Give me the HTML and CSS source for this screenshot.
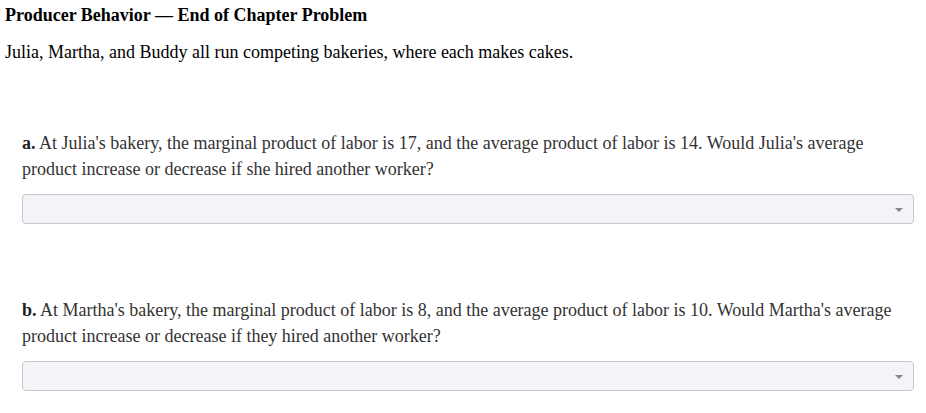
FILE: index.html
```
<!DOCTYPE html>
<html>
<head>
<meta charset="utf-8">
<link rel="stylesheet" href="styles.css">
</head>
<body>
<div class="page">
  <h1 class="title">Producer Behavior — End of Chapter Problem</h1>
  <p class="intro">Julia, Martha, and Buddy all run competing bakeries, where each makes cakes.</p>
  <div class="question q-a">
    <p class="qtext"><b>a.</b> At Julia's bakery, the marginal product of labor is 17, and the average product of labor is 14. Would Julia's average product increase or decrease if she hired another worker?</p>
    <div class="select"><span class="arrow"></span></div>
  </div>
  <div class="question q-b">
    <p class="qtext"><b>b.</b> At Martha's bakery, the marginal product of labor is 8, and the average product of labor is 10. Would Martha's average product increase or decrease if they hired another worker?</p>
    <div class="select"><span class="arrow"></span></div>
  </div>
</div>
</body>
</html>
```
FILE: styles.css
```
html, body { margin: 0; padding: 0; background: #fff; }
body { font-family: "Liberation Serif", "Times New Roman", serif; color: #000; }
.page { padding: 4px 5px 0 5px; }
.title { font-size: 18px; font-weight: bold; margin: 0; line-height: 22px; }
.intro { font-size: 18px; margin: 15px 0 0 0; line-height: 22px; }
.question { padding: 0 7px 0 17px; }
.q-a { margin-top: 67px; }
.q-b { margin-top: 73px; }
.qtext { margin: 0; font-size: 18px; line-height: 26px; color: #333; }
.qtext b { color: #222; }
.select { margin-top: 12px; height: 28px; border: 1px solid #c8c8cc; border-radius: 4px; background: #f3f4f8; display: flex; align-items: center; justify-content: flex-end; padding-right: 10px; }
.arrow { width: 0; height: 0; border-left: 4px solid transparent; border-right: 4px solid transparent; border-top: 4px solid #888; margin-top: 2px; }
```
